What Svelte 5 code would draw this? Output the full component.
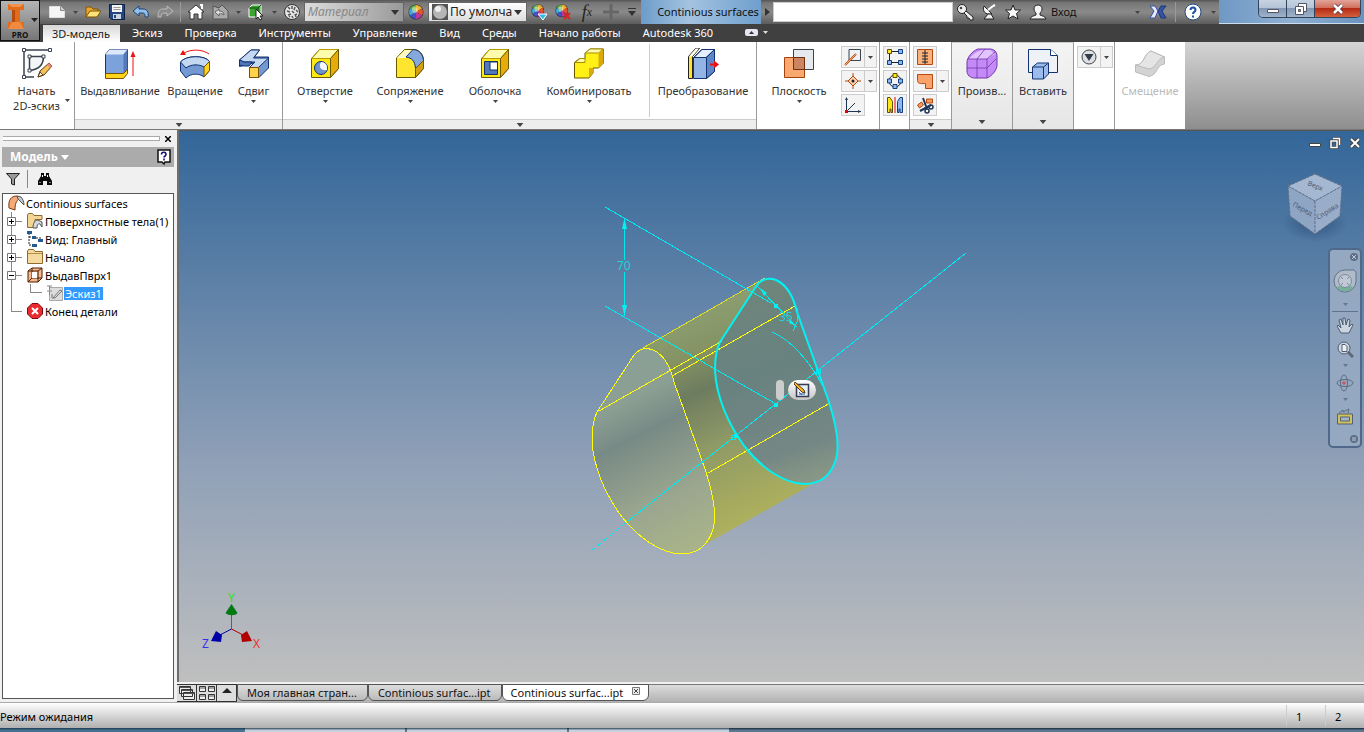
<script>
	let activeTab = $state('3D-модель');
	let activeDoc = $state(2);
	let selectedNode = $state('Эскиз1');
	let search = $state('');

	const tabs = [
		'3D-модель', 'Эскиз', 'Проверка', 'Инструменты', 'Управление',
		'Вид', 'Среды', 'Начало работы', 'Autodesk 360'
	];

	const createTools = [
		{ icon: 'extrude', label: 'Выдавливание' },
		{ icon: 'revolve', label: 'Вращение' },
		{ icon: 'sweep', label: 'Сдвиг', more: true }
	];

	const modifyTools = [
		{ icon: 'hole', label: 'Отверстие', more: true },
		{ icon: 'fillet', label: 'Сопряжение', more: true },
		{ icon: 'shell', label: 'Оболочка', more: true },
		{ icon: 'combine', label: 'Комбинировать', more: true }
	];

	const nodes = [
		{ icon: 'bodies', label: 'Поверхностные тела(1)', sign: '+' },
		{ icon: 'views', label: 'Вид: Главный', sign: '+' },
		{ icon: 'folder', label: 'Начало', sign: '+' },
		{ icon: 'surface', label: 'ВыдавПврх1', sign: '-', child: { icon: 'sketch', label: 'Эскиз1' } },
		{ icon: 'end', label: 'Конец детали' }
	];

	const docs = ['Моя главная стран...', 'Continious surfac...ipt', 'Continious surfac...ipt'];

	// contour of the extruded profile, used for both ends of the surface
	const loop = 'M757 285C762 279 768 277 776 280C785 284 793 295 797 312L829 402C836 424 840 445 836 459C831 476 820 484 804 484C783 483 762 468 745 447C728 424 716 396 715 370C715 355 717 348 720 342Z';
</script>

{#snippet down()}
	<svg class="down" width="5" height="3" viewBox="0 0 5 3" aria-hidden="true"><path d="M0 0h5L2.5 3z" fill="currentColor" /></svg>
{/snippet}

{#snippet wheel()}
	<circle cx="8" cy="8" r="7.5" fill="#222" />
	<path d="M8 8V1a7 7 0 0 1 6 3.500z" fill="#f1b22e" />
	<path d="M8 8l6-3.500a7 7 0 0 1 0 7z" fill="#e2542c" />
	<path d="M8 8l6 3.500A7 7 0 0 1 8 15z" fill="#c0379b" />
	<path d="M8 8v7a7 7 0 0 1-6-3.500z" fill="#4252c9" />
	<path d="M8 8l-6 3.500a7 7 0 0 1 0-7z" fill="#3fa7d8" />
	<path d="M8 8L2 4.500A7 7 0 0 1 8 1z" fill="#62b84a" />
	<circle cx="7" cy="6" r="3" fill="#fff" opacity=".45" />
{/snippet}

{#snippet small(name)}
	<svg width="18" height="18" viewBox="-1 -1 18 18" aria-hidden="true">
		{#if name === 'new'}
			<path d="M.5 2.500h11l4 4v7H.5z" fill="#f5f5f5" stroke="#ddd" /><path d="M11.500 2.500v4h4" fill="#ccc" stroke="#888" />
		{:else if name === 'open'}
			<path d="M1 13V3h5l2 2h5v3" fill="#e8a92c" stroke="#7d5200" /><path d="M1 13l4-6h11l-4 6z" fill="#ffe27a" stroke="#7d5200" />
		{:else if name === 'save'}
			<path d="M.5.5h15v15h-13l-2-2z" fill="#27477e" stroke="#0d2145" /><path d="M3 1h10v7H3z" fill="#f4f4f4" /><path d="M4.500 3.500h7M4.500 5.500h7" stroke="#999" /><path d="M4 10h8v5H4z" fill="#cdd5e2" /><path d="M5 11h2v3H5z" fill="#27477e" />
		{:else if name === 'undo'}
			<path d="M0 7l6-5v3h4c4 0 6 3 5 8h-3c0-3 0-4-3-4H6v3z" fill="#8fc0ee" stroke="#1b4273" />
		{:else if name === 'redo'}
			<path d="M16 7l-6-5v3H6C2 5 1 8 1 13h3c0-3 1-4 3-4h3v3z" fill="#8b8b8b" stroke="#bbb" />
		{:else if name === 'home'}
			<path d="M0 8l8-7 8 7h-2v7h-4v-5H6v5H2V8z" fill="#fff" stroke="#333" /><path d="M12 1h2v4" fill="none" stroke="#fff" stroke-width="2" />
		{:else if name === 'render'}
			<path d="M1 2l6 2 3-3 6 6v8H1z" fill="#aaa" stroke="#555" /><path d="M3 8l4-3v2c3 0 5 1 5 4-1-1-3-2-5-1v2z" fill="#ddd" stroke="#666" />
		{:else if name === 'select'}
			<path d="M1 4l3-3h9v9l-3 3H1z" fill="#39a52e" stroke="#fff" /><path d="M1 4h9v9M10 4l3-3" fill="none" stroke="#0f4d0a" /><path d="M8 5v10l2-2 2 3 2-1-2-3h3z" fill="#fff" stroke="#222" />
		{:else if name === 'ball'}
			<circle cx="8" cy="8" r="7.500" fill="#e6e6e6" stroke="#333" /><path d="M4 3l2 2M8 2v3M11 3l-1 3M3 7l3 1M8 7l2 2M12 6l2 2M4 11l3-1M8 12l1 2M11 10l1 3M6 13l-1-1M13 10l-2 1" stroke="#555" stroke-width="1.500" />
		{:else if name === 'wheel'}
			{@render wheel()}
		{:else if name === 'wheeldrop'}
			<g transform="scale(.85)">{@render wheel()}</g><path d="M7 10h9l-4 6z" fill="#32bde8" stroke="#fff" />
		{:else if name === 'wheelx'}
			<g transform="scale(.85)">{@render wheel()}</g><path d="M9 9l6 6m0-6l-6 6" stroke="#d8261c" stroke-width="2" />
		{:else if name === 'plus'}
			<path d="M6.500 0h3v6.500H16v3H9.500V16h-3V9.500H0v-3h6.500z" fill="#666" />
		{:else if name === 'key'}
			<circle cx="5" cy="5" r="4.500" fill="#eee" stroke="#222" /><path d="M7 9l2-2 7 6v3h-3l-1-2h-2v-2z" fill="#eee" stroke="#222" /><circle cx="4" cy="4" r="1.300" fill="#444" />
		{:else if name === 'dish'}
			<path d="M3 2c-2 5 1 9 8 8z" fill="#f4f4f4" stroke="#222" /><path d="M7 6l5-4M12 2l2-1" stroke="#fff" stroke-width="2" /><path d="M7 10l-4 5h10l-3-5z" fill="#eee" stroke="#222" />
		{:else if name === 'star'}
			<path d="M8 1l2 5h5.500l-4 3.500 1.500 5.500-5-3-5 3 1.500-5.500L.5 6H6z" fill="#fafafa" stroke="#222" />
		{:else if name === 'user'}
			<path d="M8 1c3 0 4 2 4 4s-1 3-2 4v2c2 1 5 1 6 4H0c1-3 4-3 6-4V9C5 8 4 7 4 5s1-4 4-4z" fill="#f4f4f4" stroke="#222" />
		{:else if name === 'exchange'}
			<path d="M0 2h5l3 5-3 7H0l4-7z" fill="#e5e9fa" stroke="#3652a5" /><path d="M16 2h-5L8 7l3 7h5l-4-7z" fill="#3652a5" stroke="#1d3680" />
		{:else if name === 'help'}
			<circle cx="8" cy="8" r="8" fill="#fff" stroke="#244a7c" /><path d="M5.500 6c0-3.500 5-3.500 5 0 0 2-2.500 1.800-2.500 4M8 11.500v2" fill="none" stroke="#1d50a5" stroke-width="2" />
		{:else if name === 'axis'}
			<path d="M4 .5h11.500v11H4z" fill="#eef0f3" stroke="#3b4350" /><path d="M0 16L11 5" stroke="#b44a10" stroke-width="2" /><path d="M0 16L11 5" stroke="#f3a36b" />
		{:else if name === 'point'}
			<path d="M8 0v16M0 8h16" stroke="#b44a10" /><path d="M8 3l5 5-5 5-5-5z" fill="#fbcfab" stroke="#b44a10" /><circle cx="8" cy="8" r="1.500" fill="#222" />
		{:else if name === 'ucs'}
			<path d="M1.500 1v13.500H16M1.500 14.500L10 6" fill="none" stroke="#1f3555" /><path d="M0 3l1.500-3L3 3zM13 13l3 1.500-3 1.500z" fill="#1f3555" /><path d="M0 13h3v3H0z" fill="#e00" />
		{:else if name === 'rect'}
			<path d="M5 2.500h6M2.500 5v6M5 13.500h6" stroke="#222" /><path d="M.5.5h4v4h-4z" fill="#ffe61a" stroke="#5b5200" /><path d="M11.500.5h4v4h-4zM.5 11.500h4v4h-4zM11.500 11.500h4v4h-4z" fill="#8fb8ee" stroke="#123f82" />
		{:else if name === 'circ'}
			<circle cx="8" cy="8" r="6" fill="none" stroke="#222" /><path d="M6 .5h4v4H6z" fill="#ffe61a" stroke="#5b5200" /><path d="M.5 6h4v4h-4zM11.500 6h4v4h-4zM6 11.500h4v4H6z" fill="#8fb8ee" stroke="#123f82" />
		{:else if name === 'mirror'}
			<path d="M.5.5H3l2.500 4v11H4V12H3v3.500H.5z" fill="#ffe61a" stroke="#5b5200" /><path d="M15.500.5H13l-2.500 4v11H12V12h1v3.500h2.500z" fill="#8fb8ee" stroke="#123f82" /><path d="M8 0v16" stroke="#e00" />
		{:else if name === 'stitch'}
			<path d="M.5.5h15v15H.5z" fill="#f9b27c" stroke="#b44a10" /><path d="M8 1v14M5 4h6M5 7h6M5 10h6M5 13h6" stroke="#222" />
		{:else if name === 'patch'}
			<path d="M.5 1.500h15v14h-7v-5c-3 0-8 1-8-3z" fill="#f9a36b" stroke="#b44a10" />
		{:else if name === 'trim'}
			<path d="M9.500 2h6v4h-6zM.5 8l4-3 2 3-4 3z" fill="#f39a5e" stroke="#b44a10" /><path d="M6 1l4 11M3 14l11-6" stroke="#1f3555" stroke-width="2" /><circle cx="10" cy="14" r="2" fill="none" stroke="#1f3555" stroke-width="1.500" /><circle cx="14" cy="10" r="2" fill="none" stroke="#1f3555" stroke-width="1.500" />
		{:else if name === 'convert'}
			<circle cx="8" cy="8" r="7" fill="#dcdfe3" stroke="#444" /><path d="M3.500 5h9L8 12z" fill="#333d4a" />
		{:else if name === 'part'}
			<path d="M1 13C0 5 3 1 9 1l3 2c-4 3-5 6-5 12z" fill="#f3ab78" stroke="#7b3b12" /><path d="M9 1l4 1c2 2 3 5 3 8l-4-4-2-2z" fill="#c4c8cc" stroke="#555" />
		{:else if name === 'bodies'}
			<path d="M.5 14.500V2l1-1.500h4L7 2.500h8v4H8l-1 8z" fill="#f3d596" stroke="#8d6c2c" /><path d="M6 15c0-5 2-8 5-8l4 2v5l-2-3c-2-1-3 1-3 4z" fill="#d5dade" stroke="#555" />
		{:else if name === 'views'}
			<path d="M2 2v12h3M2 6h4M9 7h5" fill="none" stroke="#222" stroke-dasharray="2 1" /><path d="M0 0h5v3H0zM5 5h4v3H5zM11 8h5v3h-5zM5 13h5v3H5z" fill="#235a92" />
		{:else if name === 'folder'}
			<path d="M.5 14.500V2l1-1.500h5L8 2.500h7.500v12z" fill="#f5d99e" stroke="#8d6c2c" /><path d="M1 4.500h14" stroke="#b38c46" />
		{:else if name === 'surface'}
			<path d="M1 4l4-3h10v10l-4 4H1z" fill="#f7b98c" stroke="#4a1f06" /><path d="M1 4h10v11M11 4l4-3M5 1v10l-4 4M5 11h10" fill="none" stroke="#4a1f06" /><path d="M5 5h5v6H5z" fill="#fff" />
		{:else if name === 'sketch'}
			<path d="M2.500 2.500h13v13h-13z" fill="#dcdcdc" stroke="#aaa" /><path d="M6 13l7-8 2 1-7 7H5V9" stroke="#777" fill="none" /><path d="M0 1h5M2.500 1v4M0 6h5M2.500 6v4" stroke="#888" />
		{:else if name === 'end'}
			<path d="M5 .5h6L15.500 5v6L11 15.500H5L.5 11V5z" fill="#ea2a2e" stroke="#7d0c0e" /><path d="M5 5l6 6m0-6l-6 6" stroke="#fff" stroke-width="2" />
		{:else if name === 'filter'}
			<path d="M1.500 2.500h13L9.500 8v6l-3-1V8z" fill="#999" stroke="#222" />
		{:else if name === 'find'}
			<path d="M4 2h3v3h2V2h3v3l3 5v4h-5v-4H6v4H1v-4l3-5z" fill="#0b0b0b" /><path d="M3 11v1M5.500 4v2M10.500 4v2M13 11v1" stroke="#fff" />
		{:else if name === 'note'}
			<path d="M2 1h12v12H9l-1 2-2-2H2z" fill="#fff" stroke="#111" stroke-width="1.500" /><path d="M5.500 5.500c0-3 4.500-3 4.500 0 0 1.500-2 1.500-2 3M8 9.500v2" fill="none" stroke="#10107a" stroke-width="1.600" />
		{:else if name === 'hand'}
			<path d="M4 16l-4-7 1-1 3 3-2-8 2-1 2 6V1h2l1 7 2-6 2 1-1 7 3-3 1 1-4 8z" fill="#d5dde6" stroke="#465264" />
		{:else if name === 'zoom'}
			<circle cx="7" cy="7" r="6" fill="#d5dde6" stroke="#465264" /><path d="M5 3.500h3l2 2v5H5z" fill="#fff" stroke="#465264" /><path d="M11 11l5 5" stroke="#555e6a" stroke-width="3" />
		{:else if name === 'orbit'}
			<ellipse cx="8" cy="8" rx="8" ry="3.500" fill="none" stroke="#566274" /><ellipse cx="7" cy="8" rx="3.500" ry="8" fill="none" stroke="#566274" /><path d="M7 6v4M5 8h4" stroke="#d33" />
		{:else if name === 'look'}
			<path d="M2 4l4-3v2l6-3-1 4" fill="none" stroke="#566274" /><path d="M.5 5h15v10H.5z" fill="#d9c84a" stroke="#4b5563" /><path d="M3.500 8h9v4h-9z" fill="#a3b8d0" stroke="#4b5563" />
		{/if}
	</svg>
{/snippet}

{#snippet large(name)}
	<svg class="large" width="32" height="32" viewBox="0 0 32 32" aria-hidden="true">
		{#if name === 'start'}
			<path d="M3 2h26M3 2v27h10" fill="none" stroke="#3b4350" stroke-width="1.500" /><path d="M8.500 8.500h14c0 8-5 13-14 14z" fill="#f4f5f7" stroke="#3b4350" stroke-width="1.500" /><path d="M1.500.5h3v3h-3zM27.500.5h3v3h-3zM1.500 27.500h3v3h-3zM7 7h3v3H7zM21 7h3v3h-3zM7 21h3v3H7z" fill="#fff" stroke="#3b4350" /><path d="M17 29l2-6 9-8 3 3-8 9z" fill="#f7c15a" stroke="#5c3a0c" /><path d="M26 17l3 3 2-2-3-3z" fill="#e58b83" /><path d="M17 29l2-5 3 3z" fill="#fff" stroke="#5c3a0c" />
		{:else if name === 'extrude'}
			<path d="M1.500 6.500l4-5h18v21l-4 7h-18z" fill="#7ba2da" stroke="#123272" /><path d="M1.500 6.500h18l4-5h-18z" fill="#dde9fa" /><path d="M19.500 6.500v19l4-4v-20z" fill="#5579b8" /><path d="M1.500 25.500h18l4-4v4l-4 5h-18z" fill="#ffd51c" stroke="#7a5200" /><path d="M29 28V7" stroke="#e11" /><path d="M26.500 9L29 3l2.500 6z" fill="#e11" />
		{:else if name === 'revolve'}
			<path d="M1.500 14C7 7 26 7 30.500 13.500v9L25 29c-5-4-13-4-18 1l-5.500-7z" fill="#7499d2" stroke="#123272" /><path d="M1.500 14C7 7 26 7 30.500 13.500L25 19c-5-3-13-3-18 1z" fill="#c5d8f2" stroke="#123272" /><path d="M25 19l5.500-5.500v9L25 29z" fill="#ffd51c" stroke="#7a5200" /><path d="M30 6C23 1 12 1 5 5" fill="none" stroke="#e11" /><path d="M1 7l3-5 3 5z" fill="#e11" />
		{:else if name === 'sweep'}
			<path d="M1.500 12L13 2h8.500l-5 7h14v11L21 29.500H11.500v-10L16 15l-10 2.500-4.500 1z" fill="#7499d2" stroke="#123272" /><path d="M1.500 12L13 2h8.500l-6 8h15l-10 9.500h-9L17 14H6z" fill="#c5d8f2" stroke="#123272" /><path d="M1.500 12L6 14h8l-3 4H6l-4.500-1z" fill="#4f78bb" stroke="#123272" /><path d="M11.500 19.500h9v10h-9z" fill="#ffd24a" stroke="#7a5200" />
		{:else if name === 'hole' || name === 'shell'}
			<path d="M2.500 10.500l8-9h19v19l-8 9h-19z" fill="#ffe913" stroke="#6b5a00" /><path d="M3 10.500h18.500l8-9h-19z" fill="#fffcae" stroke="#b89c00" /><path d="M21.500 10.500v19l8-9v-19z" fill="#e6ac0c" stroke="#6b5a00" />
			{#if name === 'hole'}
				<circle cx="12" cy="20" r="6.500" fill="#6f94cd" stroke="#123272" /><path d="M12 14c-3 5 0 9 6 8 1-6-3-8-6-8z" fill="#f6f9ff" />
			{:else}
				<path d="M5.500 13.500h13v13h-13z" fill="#5379b9" stroke="#123272" /><path d="M11 14h7.500v8H11z" fill="#fff" stroke="#123272" />
			{/if}
		{:else if name === 'fillet'}
			<path d="M2.500 10l8-8.500h9c6 0 10 5 10 11v8l-8 9h-19z" fill="#ffe62e" stroke="#6b5a00" /><path d="M3 10l8-8h7l-6 8z" fill="#fffcc9" /><path d="M12 9l7-7.500c6 0 10 5 10.500 11l-8 8C21 13 18 10 12 9z" fill="#86a9dd" stroke="#123272" /><path d="M21.500 20.500v9l8-9v-8z" fill="#d49f10" stroke="#6b5a00" />
		{:else if name === 'combine'}
			<path d="M1.500 14.500l5-4H12V5l5-4h13.500v14l-5 5H20v5l-4 5H1.500z" fill="#fff115" stroke="#6b5a00" /><path d="M2 14.500l5-4h5v4zM12 5l5-4h13l-4.500 4z" fill="#fffcae" stroke="#a88d00" /><path d="M25.500 5v15l5-5V1zM16 20v10l4-5v-5z" fill="#dca90a" />
		{:else if name === 'direct'}
			<path d="M1.500 8.500l7-8h4l-7 8v22h-4z" fill="#ffe62e" stroke="#222" /><path d="M2 8.500l7-8h3l-7 8z" fill="#fff" /><path d="M6.500 9.500l8-8h13v22l-8 7h-13z" fill="#93b5e5" stroke="#123272" /><path d="M7 9.500h12l8.500-8H15z" fill="#e4eefc" stroke="#123272" /><path d="M19.500 9.500v21l8-7v-22z" fill="#5e86c6" stroke="#123272" /><path d="M23 15.500h4v-3l5 4-5 4v-3h-4z" fill="#e11" />
		{:else if name === 'plane'}
			<path d="M10.500 1.500h20v20h-20z" fill="#e6e9ed" stroke="#3b4350" /><path d="M1.500 9.500h20v20h-20z" fill="#f9a970" stroke="#a4430e" /><path d="M10.500 9.500h11v12h-11z" fill="#cc8560" stroke="#6d310f" />
		{:else if name === 'free'}
			<path d="M1 14c0-4 5-11 11-13h12c4 0 7 3 7 7v9c0 5-5 11-10 13H9c-5 0-8-3-8-7z" fill="#c38af8" stroke="#7038a5" /><path d="M3 11c4-5 8-8 14-9h7l5 4-8 5z" fill="#e2c5ff" /><path d="M1 20h20l9-9M11 30V11l8-10M21 30V11l8-7M2 11h19" fill="none" stroke="#7038a5" stroke-opacity=".8" />
		{:else if name === 'insert'}
			<path d="M1.500 1.500h22l7 6v17h-29z" fill="#eef1f5" stroke="#123272" /><path d="M23.500 1.500v6h7" fill="#fff" stroke="#123272" /><path d="M5.500 19l5-4h11v11l-5 5h-11z" fill="#9bbcec" stroke="#123272" /><path d="M5.500 19h11l5-4M16.500 19v12" fill="none" stroke="#123272" />
		{:else if name === 'thicken'}
			<path d="M1.500 17C10 18 10 5 17 3l13.500 6v7C22 17 24 27 15 28.500L1.500 24z" fill="#d3d3d3" stroke="#bbb" /><path d="M1.500 17C10 18 10 5 17 3l13.500 6C22 11 23 20 15 21z" fill="#e5e5e5" stroke="#bbb" />
		{/if}
	</svg>
{/snippet}

{#snippet tool(t)}
	<button class="tool">
		{@render large(t.icon)}
		<span>{t.label}</span>
		{#if t.more}{@render down()}{/if}
	</button>
{/snippet}

{#snippet mini(name, label, more)}
	<div class="mini">
		<button aria-label={label}>{@render small(name)}</button>
		{#if more}<button class="drop" aria-label="{label}: другие">{@render down()}</button>{/if}
	</div>
{/snippet}

<div class="app">
	<header>
		<button class="logo" aria-label="Меню приложения">
			<svg width="38" height="28" viewBox="0 0 38 28" aria-hidden="true">
				<path d="M7 3h16v6h-4v12h4v7H7v-7h4V9H7z" fill="#e06c1c" /><path d="M7 3h16l-4 3h-8z" fill="#f39350" /><path d="M11 9h3v12h-3z" fill="#b94c0d" /><path d="M11 21h8l4 7H7z" fill="#f08a40" /><path d="M30 17h7l-3.500 4z" fill="#222" />
			</svg>
			<span>PRO</span>
		</button>

		<div class="head">
			<div class="titlebar">
				<div class="quick">
					<button aria-label="Создать">{@render small('new')}</button>
					<button class="thin" aria-label="Шаблоны">{@render down()}</button>
					<button aria-label="Открыть">{@render small('open')}</button>
					<button aria-label="Сохранить">{@render small('save')}</button>
					<button aria-label="Отменить">{@render small('undo')}</button>
					<button aria-label="Вернуть">{@render small('redo')}</button>
					<i class="rule"></i>
					<button aria-label="Домой">{@render small('home')}</button>
					<button aria-label="Обновить">{@render small('render')}</button>
					<button class="thin" aria-label="Варианты обновления">{@render down()}</button>
					<button aria-label="Выбор">{@render small('select')}</button>
					<button class="thin" aria-label="Варианты выбора">{@render down()}</button>
					<button aria-label="Материалы">{@render small('ball')}</button>
					<label class="combo material">
						<select aria-label="Материал" disabled><option>Материал</option></select>
						<svg width="8" height="5" viewBox="0 0 8 5" aria-hidden="true"><path d="M0 0h8L4 5z" fill="#333" /></svg>
					</label>
					<button aria-label="Цвет">{@render small('wheel')}</button>
					<label class="combo look">
						<svg width="16" height="16" viewBox="0 0 16 16" aria-hidden="true"><path d="M0 0h16v16H0z" fill="#555" /><circle cx="8" cy="8" r="7" fill="#b5b5b5" /><circle cx="6" cy="5" r="3" fill="#eee" /></svg>
						<select aria-label="Представление"><option>По умолчанию</option></select>
						<svg width="8" height="5" viewBox="0 0 8 5" aria-hidden="true"><path d="M0 0h8L4 5z" fill="#333" /></svg>
					</label>
					<button aria-label="Адаптировать">{@render small('wheeldrop')}</button>
					<button aria-label="Очистить">{@render small('wheelx')}</button>
					<button class="fx" aria-label="Параметры">f<sub>x</sub></button>
					<button aria-label="Добавить">{@render small('plus')}</button>
					<button class="thin custom" aria-label="Настроить панель"><svg width="8" height="8" viewBox="0 0 8 8"><path d="M0 .5h8" stroke="#333" /><path d="M0 3h8L4 8z" fill="#333" /></svg></button>
				</div>
				<div class="caption">Continious surfaces</div>
				<div class="info">
					<button class="thin" aria-label="Развернуть"><svg width="5" height="8" viewBox="0 0 5 8"><path d="M0 0v8l5-4z" fill="#333" /></svg></button>
					<input type="text" aria-label="Поиск" bind:value={search} />
					<button aria-label="Найти">{@render small('key')}</button>
					<button aria-label="Связь">{@render small('dish')}</button>
					<button aria-label="Избранное">{@render small('star')}</button>
					<button class="login">{@render small('user')}<span>Вход</span>{@render down()}</button>
					<button class="exchange" aria-label="Exchange">{@render small('exchange')}</button>
					<i class="rule"></i>
					<button class="wide" aria-label="Справка">{@render small('help')}</button>
					<button class="thin" aria-label="Меню справки">{@render down()}</button>
				</div>
				<div class="glass">
					<div class="winbtns">
						<button aria-label="Свернуть"><svg width="14" height="12" viewBox="0 0 14 12"><path d="M1.500 6.500h11v3h-11z" fill="#fff" stroke="#556" /></svg></button>
						<button aria-label="Восстановить"><svg width="14" height="12" viewBox="0 0 14 12"><path d="M4.500.5h8v8h-8z" fill="#fff" stroke="#556" /><path d="M1.500 3.500h8v8h-8z" fill="#fff" stroke="#556" /><path d="M4.500 6.500h2v2h-2z" fill="#99a" stroke="#556" /></svg></button>
						<button class="close" aria-label="Закрыть"><svg width="14" height="12" viewBox="0 0 14 12"><path d="M3 2l8 8m0-8l-8 8" stroke="#534" stroke-width="4" /><path d="M3 2l8 8m0-8l-8 8" stroke="#fff" stroke-width="2.500" /></svg></button>
					</div>
				</div>
			</div>
			<nav>
				{#each tabs as tab}
					<button class="tab" class:active={activeTab === tab} onclick={() => (activeTab = tab)}>{tab}</button>
				{/each}
				<button class="fold" aria-label="Свернуть ленту">
					<svg width="24" height="8" viewBox="0 0 24 8"><rect width="13" height="7" rx="2" fill="#e6e6ee" /><path d="M4 5h5L6.500 2z" fill="#333" /><path d="M18 2h5l-2.500 3z" fill="#ddd" /></svg>
				</button>
			</nav>
		</div>
	</header>

	<section class="ribbon">
		<div class="panel start">
			<button class="tool">{@render large('start')}<span>Начать<br />2D-эскиз</span></button>
			<button class="side" aria-label="Виды эскиза">{@render down()}</button>
		</div>
		<div class="panel footed">
			<div class="tools create">{#each createTools as t}{@render tool(t)}{/each}</div>
			<button class="foot" aria-label="Создать">{@render down()}</button>
		</div>
		<div class="panel footed">
			<div class="tools modify">
				{#each modifyTools as t}{@render tool(t)}{/each}
				<i class="split"></i>
				{@render tool({ icon: 'direct', label: 'Преобразование' })}
			</div>
			<button class="foot" aria-label="Изменить">{@render down()}</button>
		</div>
		<div class="panel work">
			{@render tool({ icon: 'plane', label: 'Плоскость', more: true })}
			<div class="stack">
				{@render mini('axis', 'Ось', true)}
				{@render mini('point', 'Точка', true)}
				{@render mini('ucs', 'ПСК', false)}
			</div>
		</div>
		<div class="panel stack">
			{@render mini('rect', 'Прямоугольный массив', false)}
			{@render mini('circ', 'Круговой массив', false)}
			{@render mini('mirror', 'Зеркало', false)}
		</div>
		<div class="panel footed surf">
			<div class="stack">
				{@render mini('stitch', 'Сшивка', false)}
				{@render mini('patch', 'Участок', true)}
				{@render mini('trim', 'Обрезка', false)}
			</div>
			<button class="foot" aria-label="Поверхность">{@render down()}</button>
		</div>
		<button class="panel group">{@render large('free')}<span>Произв...</span>{@render down()}</button>
		<button class="panel group">{@render large('insert')}<span>Вставить</span>{@render down()}</button>
		<div class="panel stack conv">{@render mini('convert', 'Преобразовать', true)}</div>
		<div class="panel off"><button class="tool" disabled>{@render large('thicken')}<span>Смещение</span></button></div>
	</section>

	<main>
		<aside>
			<div class="grip"><i></i><button aria-label="Закрыть панель"><svg width="6" height="6" viewBox="0 0 6 6"><path d="M0 0l6 6m0-6l-6 6" stroke="#000" stroke-width="1.500" /></svg></button></div>
			<div class="bar">
				<button class="model">Модель <svg width="8" height="5" viewBox="0 0 8 5" aria-hidden="true"><path d="M0 0h8L4 5z" fill="#fff" /></svg></button>
				<button aria-label="Справка">{@render small('note')}</button>
			</div>
			<div class="treebar">
				<button aria-label="Фильтр">{@render small('filter')}</button>
				<i></i>
				<button aria-label="Найти">{@render small('find')}</button>
			</div>
			<div class="tree">
				<div class="row root">{@render small('part')}<span>Continious surfaces</span></div>
				<ul>
					{#each nodes as n}
						<li>
							<div class="row">
								<span class="twig">{#if n.sign}<svg width="9" height="9" viewBox="0 0 9 9" aria-hidden="true"><path d="M.5.5h8v8h-8z" fill="#fff" stroke="#777" /><path d={n.sign === '+' ? 'M2 4.500h5M4.500 2v5' : 'M2 4.500h5'} stroke="#000" /></svg>{/if}</span>
								{@render small(n.icon)}
								<button class:sel={selectedNode === n.label} onclick={() => (selectedNode = n.label)}>{n.label}</button>
							</div>
							{#if n.child}
								<div class="row child">
									<span class="elbow"></span>
									{@render small(n.child.icon)}
									<button class:sel={selectedNode === n.child.label} onclick={() => (selectedNode = n.child.label)}>{n.child.label}</button>
								</div>
							{/if}
						</li>
					{/each}
				</ul>
			</div>
		</aside>

		<div class="desk">
			<div class="view">
				<svg class="scene" aria-label="Модель">
					<defs>
						<linearGradient id="band" gradientUnits="userSpaceOnUse" x1="690" y1="310" x2="775" y2="510">
							<stop offset="0" stop-color="#8c9f72" /><stop offset=".2" stop-color="#849263" /><stop offset=".36" stop-color="#6d7c5f" /><stop offset=".62" stop-color="#8f9a66" /><stop offset="1" stop-color="#adb05c" />
						</linearGradient>
						<linearGradient id="front" gradientUnits="userSpaceOnUse" x1="610" y1="360" x2="700" y2="540">
							<stop offset="0" stop-color="#8a9f96" /><stop offset=".18" stop-color="#8c9f93" /><stop offset=".36" stop-color="#788a85" /><stop offset=".7" stop-color="#9aa68f" /><stop offset="1" stop-color="#aab489" />
						</linearGradient>
						<linearGradient id="back" gradientUnits="userSpaceOnUse" x1="750" y1="290" x2="815" y2="485">
							<stop offset="0" stop-color="#6e857b" /><stop offset=".4" stop-color="#688280" /><stop offset=".8" stop-color="#758784" /><stop offset="1" stop-color="#8b9a86" />
						</linearGradient>
					</defs>
					<!-- drawn in window coordinates -->
					<g transform="translate(-179 -131)">
						<path d="M640 349L766 279L797 312L837 440L834 466L818 481L704 545L600 410L635 352Z" fill="url(#band)" />
						<path d={loop} fill="url(#back)" />
						<path d={loop} transform="translate(-123 70)" fill="url(#front)" />
						<g fill="none" stroke="#ffff00" shape-rendering="crispEdges">
							<path d={loop} transform="translate(-123 70)" />
							<path d="M643 348L765 278" stroke="#dfdf20" />
							<path d="M599 411L722 341M672 376L795 306M708 473L830 403" />
						</g>
						<path d={loop} fill="none" stroke="#00f2f2" stroke-width="2" />
						<g fill="none" stroke="#00e8f0" shape-rendering="crispEdges">
							<path d="M605 207L771 303M605 306L776 404M624.500 218V260M624.500 272V316M628 521L966 253M757 286L797 327M772 332Q800 344 824 388M797 322v-14M797 322l-4 9" />
							<path d="M591 551L628 521" stroke-dasharray="5 3" />
							<path d="M816 369h4v4h-4zM731 435h4v4h-4z" />
						</g>
						<path d="M622 229l2.500-11 2.500 11zM622 305l2.500 11 2.500-11zM774 304h4v4h-4zM774 403h4v4h-4zM790 319l6 7-7-3zM760 288l7 5-3 3zM734 434h4v4h-4z" fill="#00f2f2" />
						<g fill="#1cd3d8" font-size="12">
							<text x="617" y="270">70</text>
							<text x="779" y="321">35</text>
						</g>

						<path d="M231.500 629V612" stroke="#0a9a1a" /><path d="M231.500 629L218 636" stroke="#0000b0" /><path d="M231.500 629L245 636" stroke="#b00000" />
						<path d="M231.500 604l6 9c-2 3-9 3-12 0z" fill="#007a10" />
						<path d="M211 641l5-10 6 4-1 7z" fill="#0000a8" />
						<path d="M252 641l-5-10-6 4 1 7z" fill="#b00000" />
						<g font-size="12">
							<text x="228" y="602" fill="#2be02b">Y</text>
							<text x="202" y="648" fill="#3030f0">Z</text>
							<text x="253" y="648" fill="#f03030">X</text>
						</g>
					</g>
				</svg>

				<div class="hud">
					<i></i>
					<button aria-label="Редактировать эскиз">
						<svg width="16" height="16" viewBox="0 0 16 16"><path d="M2.500 2.500h12v12h-12z" fill="#e8eef5" stroke="#333d55" stroke-width="1.500" /><path d="M5 12h6M5 10l3 3" stroke="#2c64a8" /><path d="M1 0l9 8 1 3-3-1L0 2z" fill="#ffb52e" stroke="#5c3a0c" /></svg>
					</button>
				</div>

				<div class="docbtns">
					<button aria-label="Свернуть документ"><svg width="12" height="12" viewBox="0 0 12 12"><path d="M.5 6.500h11v3H.5z" fill="#fff" stroke="#444" /></svg></button>
					<button aria-label="Восстановить документ"><svg width="12" height="12" viewBox="0 0 12 12"><path d="M4 1.500h6.500V8M2 4h6v6.500H2z" fill="none" stroke="#444" stroke-width="3" /><path d="M4 1.500h6.500V8M2 4h6v6.500H2z" fill="none" stroke="#fff" stroke-width="1.500" /></svg></button>
					<button aria-label="Закрыть документ"><svg width="12" height="12" viewBox="0 0 12 12"><path d="M2 2l8 8m0-8l-8 8" stroke="#444" stroke-width="4" /><path d="M2 2l8 8m0-8l-8 8" stroke="#fff" stroke-width="2" /></svg></button>
				</div>

				<svg class="cube" width="68" height="76" viewBox="0 0 68 76" aria-label="Видовой куб">
					<defs><radialGradient id="shade"><stop offset="0" stop-color="#20406a" stop-opacity=".6" /><stop offset="1" stop-color="#20406a" stop-opacity="0" /></radialGradient></defs>
					<ellipse cx="34" cy="54" rx="33" ry="19" fill="url(#shade)" />
					<path d="M34 5l27 12-27 15L7 17z" fill="#a5b8d2" /><path d="M7 17l27 15v33L9 47z" fill="#8ea5c4" /><path d="M61 17L34 32v33l25-18z" fill="#99adc9" />
					<path d="M34 5l27 12-2 30-25 18L9 47 7 17zM7 17l27 15 27-15M34 32v33" fill="none" stroke="#5f6f86" stroke-dasharray="3 1" />
					<g font-size="7" fill="#4f5e77">
						<text x="26" y="16" transform="rotate(22 26 16)">Верх</text>
						<text x="11" y="37" transform="rotate(28 11 37)">Перед</text>
						<text x="37" y="51" transform="rotate(-32 37 51)">Справа</text>
					</g>
				</svg>

				<div class="navbar">
					<button class="dot" aria-label="Закрыть"><svg width="8" height="8" viewBox="0 0 8 8"><circle cx="4" cy="4" r="4" fill="#56657b" /><path d="M2 2l4 4m0-4L2 6" stroke="#c5d0de" /></svg></button>
					<button class="wheelbtn" aria-label="Штурвал">
						<svg width="24" height="24" viewBox="0 0 24 24"><path d="M12 1h9l2 2v9A11 11 0 1 1 12 1z" fill="#b5bfcb" stroke="#5a697e" /><path d="M4 18c5-3 11-3 16 0-4 6-12 6-16 0z" fill="#72b292" /><circle cx="12" cy="12" r="6.500" fill="#c7ced8" stroke="#78869a" /><path d="M8 8l2 2m6-2l-2 2m-6 6l2-2m6 2l-2-2" stroke="#78869a" /></svg>
					</button>
					{@render down()}
					<hr />
					<button aria-label="Панорама">{@render small('hand')}</button>
					<button aria-label="Зум">{@render small('zoom')}</button>
					{@render down()}
					<button aria-label="Орбита">{@render small('orbit')}</button>
					{@render down()}
					<button aria-label="Вид на объект">{@render small('look')}</button>
					<button class="dot" aria-label="Настройка"><svg width="8" height="8" viewBox="0 0 8 8"><circle cx="4" cy="4" r="4" fill="#56657b" /><path d="M2 3h4M2 5h4" stroke="#c5d0de" /></svg></button>
				</div>
			</div>

			<div class="docs">
				<button class="sq" aria-label="Каскад"><svg width="16" height="14" viewBox="0 0 16 14"><path d="M.5.5h11v7H.5zM2.500 3.500h11v7h-11zM4.500 6.500h11v7h-11z" fill="#eee" stroke="#333" /><path d="M1 1.500h10M3 4.500h10M5 7.500h10" stroke="#555" /></svg></button>
				<button class="sq" aria-label="Мозаика"><svg width="16" height="14" viewBox="0 0 16 14"><path d="M.5.5h6v5h-6zM9.500.5h6v5h-6zM.5 8.500h6v5h-6zM9.500 8.500h6v5h-6z" fill="#eee" stroke="#333" /><path d="M1 2h5M10 2h5M1 10h5M10 10h5" stroke="#555" /></svg></button>
				<button class="sq" aria-label="Список документов"><svg width="10" height="12" viewBox="0 0 10 12"><path d="M0 6h10L5 1z" fill="#222" /></svg></button>
				{#each docs as doc, i}
					<button class="doc" class:active={activeDoc === i} onclick={() => (activeDoc = i)}>
						{doc}
						{#if activeDoc === i}
							<svg width="8" height="8" viewBox="0 0 8 8" aria-hidden="true"><path d="M.5.5h7v7h-7z" fill="#eee" stroke="#777" /><path d="M2 2l4 4m0-4L2 6" stroke="#444" /></svg>
						{/if}
					</button>
				{/each}
			</div>
		</div>
	</main>

	<footer>
		<span class="ready">Режим ожидания</span>
		<span class="num">1</span>
		<span class="num">2</span>
	</footer>
	<div class="taskbar"><i class="orb"></i><i></i><i></i><i></i></div>
</div>

<style>
	:global(body) {
		margin: 0;
		background: #f0f0f0;
	}

	.app {
		display: flex;
		flex-direction: column;
		min-height: 100vh;
		font-family: 'Noto Sans', 'Open Sans', sans-serif;
		font-size: 11px;
		line-height: 16px;
		color: #333;
	}

	button {
		display: flex;
		align-items: center;
		justify-content: center;
		margin: 0;
		padding: 0;
		border: 0;
		background: none;
		font: inherit;
		color: inherit;
		white-space: nowrap;
	}

	svg {
		flex: none;
		display: block;
	}

	i {
		flex: none;
	}

	/* title bar and tabs */
	header {
		display: flex;
		height: 42px;
		background: #404040;
	}

	.logo {
		flex: none;
		flex-direction: column;
		width: 40px;
		height: 41px;
		border: 1px solid #111;
		background: linear-gradient(#b5b5b5, #777);
		box-sizing: border-box;
	}

	.logo span {
		width: 36px;
		font-size: 8px;
		line-height: 11px;
		font-weight: bold;
		color: #111;
	}

	.head {
		flex: 1;
		min-width: 0;
	}

	.titlebar {
		display: flex;
		height: 24px;
		background: #739bc5;
	}

	.quick,
	.info {
		display: flex;
		align-items: center;
		background: linear-gradient(#555 0, #777 3px, #8a8a8a 12px, #5c5c5c 24px);
		color: #333;
	}

	.quick {
		flex: none;
		padding-left: 5px;
	}

	.quick button,
	.info button {
		flex: none;
		width: 24px;
		height: 24px;
	}

	.quick .thin,
	.info .thin {
		width: 12px;
	}

	.quick .custom {
		width: 18px;
	}

	.rule {
		width: 1px;
		height: 20px;
		margin: 0 3px;
		background: #999;
	}

	.combo {
		display: flex;
		align-items: center;
		gap: 2px;
		height: 20px;
		padding: 0 4px 0 3px;
		border: 1px solid #666;
		background: linear-gradient(#fff, #ddd);
		box-sizing: border-box;
	}

	.combo select {
		flex: 1;
		min-width: 0;
		padding: 0;
		border: 0;
		appearance: none;
		background: none;
		font: inherit;
		font-size: 12px;
		color: #222;
		opacity: 1;
	}

	.material {
		width: 100px;
		background: linear-gradient(90deg, #ddd, #999);
	}

	.material select {
		font-style: italic;
		color: #888;
	}

	.look {
		width: 99px;
	}

	.quick .fx {
		font-family: 'Liberation Serif', serif;
		font-style: italic;
		font-size: 18px;
		color: #222;
	}

	.fx sub {
		font-size: 12px;
	}

	.caption {
		flex: none;
		width: 120px;
		background: linear-gradient(90deg, #6c9cc9, #a4c3e0 40%, #6f9fcd);
		line-height: 24px;
		text-align: center;
		text-indent: 14px;
		white-space: nowrap;
		color: #111;
	}

	.info {
		flex: 1;
		min-width: 0;
	}

	.info input {
		width: 180px;
		height: 20px;
		padding: 0 4px;
		border: 1px solid #ccc;
		background: #fff;
		font: inherit;
		box-sizing: border-box;
	}

	.info .login {
		flex: 1;
		gap: 4px;
		padding: 0 4px;
		color: #111;
	}

	.login span {
		flex: 1;
		text-align: left;
	}

	.info .exchange,
	.info .wide {
		width: 28px;
	}

	.glass {
		display: flex;
		flex: none;
		justify-content: flex-end;
		align-items: flex-start;
		width: 145px;
		padding-right: 3px;
		border-bottom: 1px solid #cde;
		background: linear-gradient(90deg, #6f98c4, #8fb0d2 50%, #6a92be);
		box-sizing: border-box;
	}

	.winbtns {
		display: flex;
		border: 1px solid #33435a;
		border-top: 0;
		border-radius: 0 0 5px 5px;
		overflow: hidden;
	}

	.winbtns button {
		width: 28px;
		height: 17px;
		border-right: 1px solid #33435a;
		background: linear-gradient(#c7d3e2, #b3c2d6 50%, #8197b4 50%, #9fb3cb);
	}

	.winbtns .close {
		width: 45px;
		border: 0;
		background: linear-gradient(#e2a498, #cf6a58 50%, #b42a14 50%, #d4613e);
	}

	nav {
		display: flex;
		height: 18px;
		padding-left: 2px;
		color: #fff;
	}

	.tab {
		padding: 0 11px;
		line-height: 18px;
	}

	.tab.active {
		padding: 0 10px 0 9px;
		margin: 1px 1px 0 1px;
		background: linear-gradient(#d6d6d6, #fff);
		color: #222;
	}

	.fold {
		margin-left: 21px;
	}

	/* ribbon */
	.ribbon {
		display: flex;
		height: 87px;
		border-bottom: 1px solid #777;
		background: linear-gradient(#d4d4d4, #8e8e8e);
	}

	.panel {
		display: flex;
		flex: none;
		border-right: 1px solid #999;
		background: #fff;
	}

	.footed {
		flex-direction: column;
		justify-content: space-between;
	}

	.tool {
		flex-direction: column;
		justify-content: flex-start;
		padding-top: 6px;
	}

	.tool span,
	.group span {
		margin: 3px 0 2px;
	}

	.tool span {
		line-height: 15px;
	}

	.down {
		color: #444;
	}

	.foot {
		height: 10px;
		background: #ededed;
		border-top: 1px solid #ccc;
	}

	.foot :global(.down),
	.group :global(.down) {
		width: 8px;
		height: 4px;
	}

	.start {
		width: 74px;
	}

	.start .tool {
		width: 73px;
	}

	.start .side {
		width: 8px;
		margin-left: -10px;
		padding-top: 30px;
	}

	.tools {
		display: grid;
		height: 74px;
	}

	.create {
		grid-template-columns: 90px 60px 57px;
	}

	.modify {
		grid-template-columns: 84px 86px 84px 104px 9px 106px;
	}

	.split {
		width: 1px;
		height: 73px;
		margin: 2px 0 0 8px;
		background: #ccc;
	}

	.work .tool {
		width: 84px;
	}

	.stack {
		display: flex;
		flex-direction: column;
		gap: 2px;
		padding: 4px 2px 0 3px;
	}

	.work .stack {
		padding-left: 0;
	}

	.mini {
		display: flex;
		height: 22px;
	}

	.mini button {
		width: 24px;
		border: 1px solid #ccc;
		background: #f3f3f3;
		box-sizing: border-box;
	}

	.mini .drop {
		width: 13px;
		margin-left: -1px;
	}

	.group {
		flex-direction: column;
		justify-content: flex-start;
		width: 61px;
		padding-top: 5px;
		background: linear-gradient(#f4f4f4, #e6e6e6);
		border-top: 1px solid #ccc;
		box-sizing: border-box;
	}

	.group span {
		margin-bottom: 21px;
	}

	.conv {
		padding-right: 1px;
	}

	.off {
		border-right: 0;
	}

	.off .tool {
		width: 70px;
		color: #bbb;
	}

	/* browser panel */
	main {
		display: flex;
		flex: 1;
		min-height: 0;
		border-bottom: 1px solid #aaa;
	}

	aside {
		display: flex;
		flex: none;
		flex-direction: column;
		width: 179px;
		padding: 0 3px 3px 2px;
		border-right: 2px solid #6e6e6e;
		background: #f0f0f0;
		box-sizing: border-box;
	}

	.grip {
		display: flex;
		align-items: center;
		gap: 5px;
		height: 17px;
		padding-right: 3px;
	}

	.grip i {
		flex: 1;
		height: 3px;
		margin-left: 1px;
		border: 1px solid #aaa;
		border-left: 0;
		background: #fff;
	}

	.bar {
		display: flex;
		justify-content: space-between;
		height: 20px;
		padding: 0 1px 0 8px;
		background: #ababab;
	}

	.model {
		gap: 3px;
		font-size: 12px;
		font-weight: bold;
		color: #fff;
	}

	.treebar {
		display: flex;
		align-items: center;
		gap: 5px;
		height: 24px;
		padding: 0 2px 2px;
	}

	.treebar i {
		width: 1px;
		height: 18px;
		margin-right: 3px;
		background: #888;
	}

	.tree {
		flex: 1;
		border: 1px solid #555;
		background: #fff;
		color: #000;
	}

	.row {
		display: flex;
		align-items: center;
		height: 18px;
	}

	.row button,
	.root span {
		padding: 0 1px;
		line-height: 13px;
	}

	.root {
		padding-left: 4px;
	}

	ul {
		margin: 0;
		padding: 0 0 0 4px;
		list-style: none;
	}

	li {
		background: linear-gradient(#888, #888) 4px 0 / 1px 100% no-repeat;
	}

	li:last-child {
		background-size: 1px 9px;
	}

	.twig {
		display: flex;
		width: 19px;
		background: linear-gradient(#888, #888) 4px 4px / 11px 1px no-repeat;
		min-height: 9px;
	}

	.elbow {
		align-self: flex-start;
		width: 12px;
		height: 9px;
		margin: 0 4px 0 23px;
		border-left: 1px solid #888;
		border-bottom: 1px solid #888;
		box-sizing: border-box;
	}

	.row .sel {
		background: #3399ff;
		color: #fff;
	}

	/* graphics window */
	.desk {
		display: flex;
		flex: 1;
		flex-direction: column;
		min-width: 0;
	}

	.view {
		position: relative;
		flex: 1;
		overflow: hidden;
		border-top: 1px solid #555;
		background: linear-gradient(#336699, #8fa0b7 60%, #bfbfbf);
	}

	.scene {
		position: absolute;
		inset: 0;
		width: 100%;
		height: 100%;
	}

	.hud {
		position: absolute;
		left: 597px;
		top: 249px;
		display: flex;
		gap: 4px;
		height: 20px;
	}

	.hud i {
		width: 8px;
		border-radius: 4px;
		background: #ccc;
	}

	.hud button {
		width: 28px;
		border-radius: 10px;
		background: linear-gradient(#fff, #c5c5c5);
	}

	.docbtns {
		position: absolute;
		top: 6px;
		right: 3px;
		display: flex;
		gap: 8px;
	}

	.cube {
		position: absolute;
		top: 38px;
		right: 15px;
	}

	.navbar {
		position: absolute;
		top: 117px;
		right: 2px;
		display: flex;
		flex-direction: column;
		align-items: center;
		width: 34px;
		height: 200px;
		padding: 3px 2px;
		border: 2px solid #50698a;
		border-radius: 5px;
		background: #94a8c1;
		box-sizing: border-box;
	}

	.navbar button {
		height: 24px;
	}

	.navbar button :global(svg) {
		opacity: 0.85;
	}

	.navbar .dot {
		align-self: flex-end;
		height: 8px;
	}

	.navbar .dot:last-child {
		margin-top: auto;
	}

	.navbar .wheelbtn {
		height: 32px;
		margin: 4px 0 3px;
	}

	.navbar :global(.down) {
		margin: 3px 0 4px;
		color: #66768c;
	}

	.navbar hr {
		width: 26px;
		height: 1px;
		margin: 1px 0;
		border: 0;
		background: #5f7390;
	}

	/* document tabs */
	.docs {
		display: flex;
		height: 18px;
		margin-left: -2px;
		border-top: 2px solid #f0f0f0;
		background: linear-gradient(#777 1px, #dcdcdc 1px, #b2b2b2);
		color: #111;
	}

	.sq {
		width: 20px;
		border: 1px solid #333;
		border-left-width: 0;
		background: #ddd;
		box-sizing: border-box;
	}

	.doc {
		gap: 9px;
		height: 17px;
		padding: 0 10px 0 9px;
		border: 1px solid #555;
		border-radius: 0 0 6px 6px;
		background: linear-gradient(#ddd, #bbb);
		box-sizing: border-box;
	}

	.doc.active {
		padding: 0 8px;
		background: #fff;
	}

	.doc svg {
		margin-bottom: 3px;
	}

	footer {
		display: flex;
		height: 25px;
		background: linear-gradient(#fff, #b0b0b0);
		line-height: 27px;
		color: #000;
	}

	.ready {
		flex: 1;
	}

	.num {
		width: 29px;
		margin: 2px 0;
		padding-left: 9px;
		border-left: 1px solid #ccc;
		line-height: 23px;
	}

	.taskbar {
		display: flex;
		gap: 2px;
		height: 4px;
		background: linear-gradient(#1a2c3e, #5b7791 60%);
	}

	.taskbar i {
		width: 160px;
		background: linear-gradient(#33495e, #c6d2dd 60%);
	}

	.taskbar .orb {
		width: 243px;
		background: linear-gradient(#1f3d57, #44718f 60%);
	}
</style>
